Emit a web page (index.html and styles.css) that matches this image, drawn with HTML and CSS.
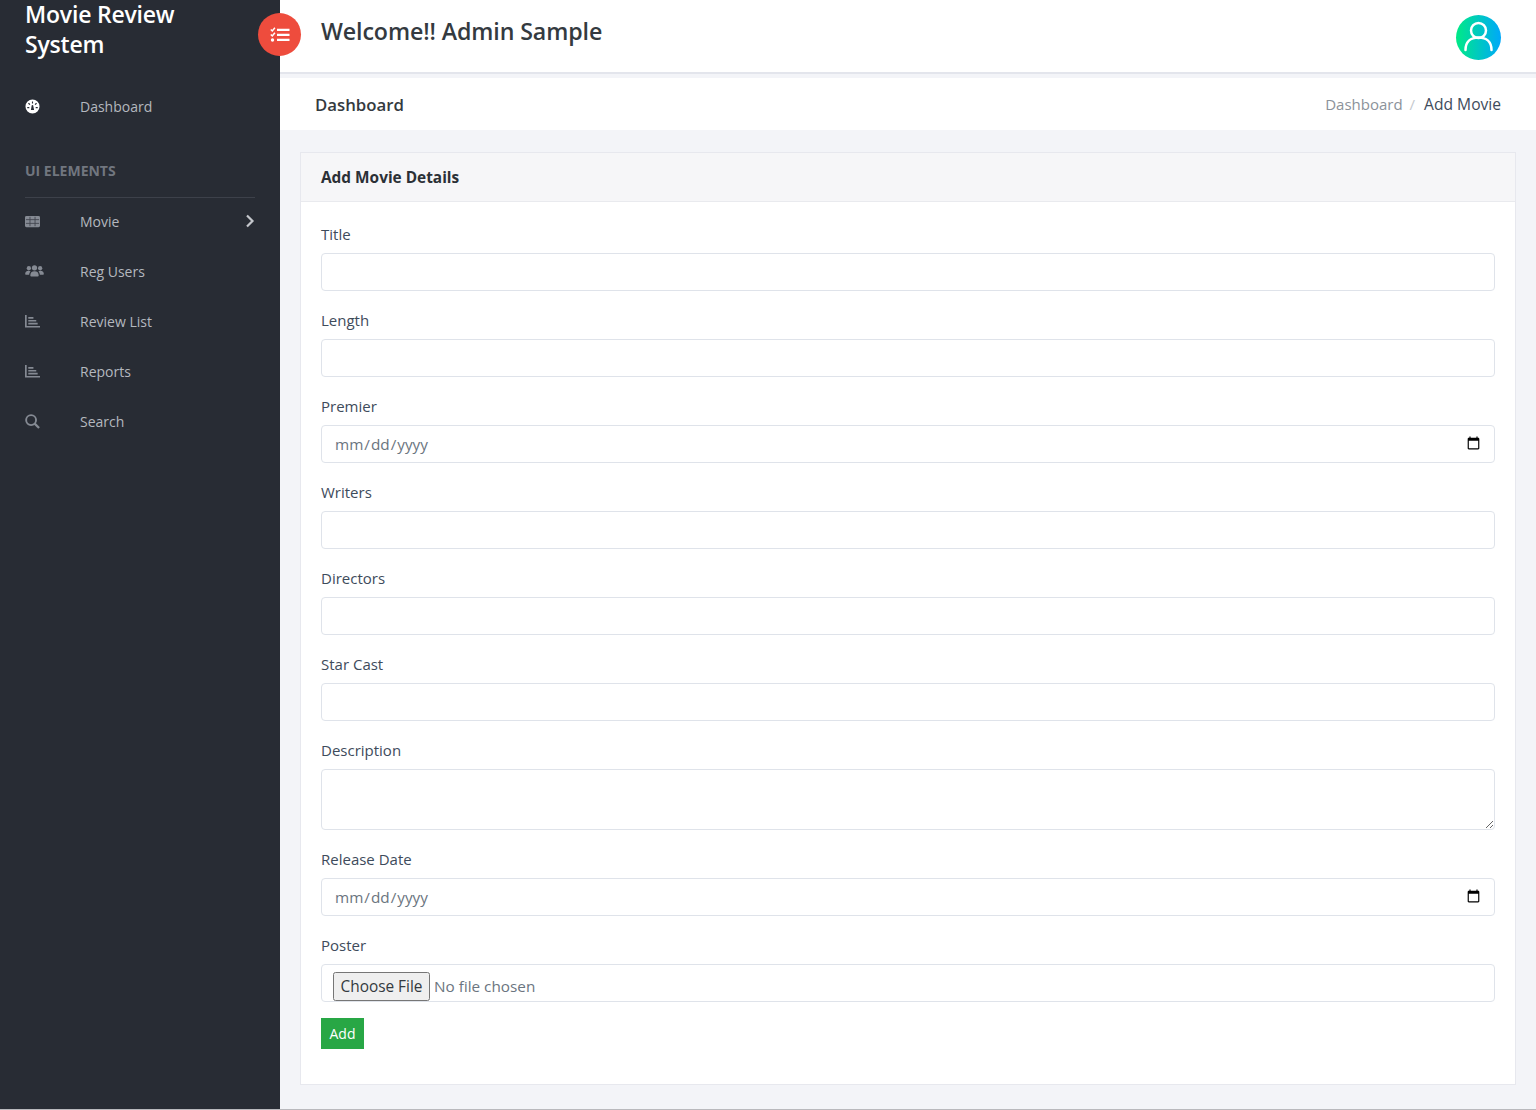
FILE: index.html
```html
<!DOCTYPE html>
<html lang="en">
<head>
<meta charset="utf-8">
<title>Add Movie</title>
<link rel="stylesheet" href="styles.css">
</head>
<body>
<div class="app">
  <aside class="sidebar">
    <div class="brand">Movie Review System</div>
    <nav class="nav">
      <a class="nav-item first"><svg class="nav-icon white" viewBox="0 0 16 16"><path fill-rule="evenodd" d="M8 .5a7.500 7.500 0 1 1 0 15 7.500 7.500 0 0 1 0-15zM7.400 2.600v2.200h1.200V2.600zM4.200 4l-1 .8 1.500 1.600 1-.8zm7.600 0-1.500 1.600 1 .8 1.500-1.600zM8.600 6.500l-1.400.2-.9 5h3.400zM2.400 8.600v1.300h2.200V8.600zm9 0v1.300h2.200V8.600z"/></svg><span>Dashboard</span></a>
      <div class="nav-title">UI ELEMENTS</div>
      <a class="nav-item"><svg class="nav-icon" viewBox="0 0 16 16"><rect x="0" y="2" width="16" height="12" rx="1.500"/><path d="M1 6h14M1 10h14M5.300 3v10M10.700 3v10" fill="none" stroke="#40444c" stroke-width=".9"/></svg><span>Movie</span><svg class="chevron" viewBox="0 0 10 14"><path d="M2 1.500 7.500 7 2 12.500" fill="none" stroke="currentColor" stroke-width="2.200"/></svg></a>
      <a class="nav-item"><svg class="nav-icon wide" viewBox="0 0 20 16"><circle cx="4" cy="4.500" r="2.300"/><circle cx="16" cy="4.500" r="2.300"/><circle cx="10" cy="4" r="2.800"/><path d="M0 11c0-2.500 1.300-3.800 3.500-3.800 1 0 1.800.3 2.300.8C4.800 9 4.300 10.200 4.300 11.500H1c-.6 0-1-.2-1-.5zM20 11c0-2.500-1.300-3.800-3.500-3.800-1 0-1.800.3-2.300.8 1 1 1.500 2.200 1.500 3.500H19c.6 0 1-.2 1-.5zM10 7.800c3 0 4.500 1.600 4.500 4.500 0 .6-.4.900-1 .9h-7c-.6 0-1-.3-1-.9 0-2.900 1.500-4.500 4.500-4.500z"/></svg><span>Reg Users</span></a>
      <a class="nav-item"><svg class="nav-icon" viewBox="0 0 16 16"><path d="M0 1h1.800v11.700H16v1.800H0zM3.500 3.200h5.500v1.800H3.500zM3.500 6.300h8.500v1.800H3.500zM3.500 9.400h10v1.800h-10z"/></svg><span>Review List</span></a>
      <a class="nav-item"><svg class="nav-icon" viewBox="0 0 16 16"><path d="M0 1h1.800v11.700H16v1.800H0zM3.500 3.200h5.500v1.800H3.500zM3.500 6.300h8.500v1.800H3.500zM3.500 9.400h10v1.800h-10z"/></svg><span>Reports</span></a>
      <a class="nav-item"><svg class="nav-icon" viewBox="0 0 16 16"><circle cx="6.500" cy="6.500" r="5.300" fill="none" stroke="currentColor" stroke-width="2"/><path d="m10.300 10.300 4.700 4.700" stroke="currentColor" stroke-width="2.400" fill="none"/></svg><span>Search</span></a>
    </nav>
  </aside>
  <button class="toggle" aria-label="Toggle menu"><svg viewBox="0 0 20 16"><path d="M7 1.800h12.500v2.300H7zM7 6.800h12.500v2.300H7zM7 11.800h12.500v2.300H7z" fill="#fff"/><path d="m.8 2.500 1.500 1.500L4.900.8M.8 7.500 2.300 9l2.600-3.200" fill="none" stroke="#fff" stroke-width="1.500"/><circle cx="2.500" cy="13" r="1.700" fill="#fff"/></svg></button>
  <div class="main">
    <header class="topbar">
      <h1 class="welcome">Welcome!! Admin Sample</h1>
      <div class="avatar"><svg viewBox="0 0 45 45"><circle cx="22.500" cy="15.500" r="7.500" fill="none" stroke="#fff" stroke-width="2.500"/><path d="M9.500 35c0-8 5-12.500 13-12.500s13 4.500 13 12.500" fill="none" stroke="#fff" stroke-width="2.500" stroke-linecap="round"/></svg></div>
    </header>
    <div class="crumbbar">
      <h2 class="crumb-title">Dashboard</h2>
      <div class="crumbs"><span class="crumb-muted">Dashboard</span><span class="crumb-sep">/</span><span class="crumb-current">Add Movie</span></div>
    </div>
    <div class="content">
      <form class="card">
        <div class="card-head">Add Movie Details</div>
        <div class="card-body">
          <div class="group"><label>Title</label><input class="control" type="text"></div>
          <div class="group"><label>Length</label><input class="control" type="text"></div>
          <div class="group"><label>Premier</label><input class="control date" type="date"></div>
          <div class="group"><label>Writers</label><input class="control" type="text"></div>
          <div class="group"><label>Directors</label><input class="control" type="text"></div>
          <div class="group"><label>Star Cast</label><input class="control" type="text"></div>
          <div class="group"><label>Description</label><textarea class="control area"></textarea></div>
          <div class="group"><label>Release Date</label><input class="control date" type="date"></div>
          <div class="group last"><label>Poster</label><input class="control file" type="file"></div>
          <button class="add" type="button">Add</button>
        </div>
      </form>
    </div>
  </div>
</div>
</body>
</html>
```
FILE: styles.css
```css
* { box-sizing: border-box; }
html, body { margin: 0; height: 1110px; overflow: hidden; }
body { font-family: "Open Sans", "Noto Sans", sans-serif; font-size: 14px; color: #3e4b5b; background: #b9b9bd; }
.app { display: flex; height: 1109px; position: relative; background: #f3f4f8; }
.sidebar { width: 280px; flex: none; background: #282c34; color: #b4b8bf; }
.brand { width: 210px; padding-left: 25px; font-size: 23px; line-height: 29.5px; font-weight: 600; color: #fff; letter-spacing: -0.2px; }
.nav { padding: 0 25px; margin-top: 32px; }
.nav-item { display: flex; align-items: center; height: 50px; font-size: 14px; color: #b4b8bf; }
.nav-item span { flex: 1; }
.nav-item.first { height: 30px; }
.nav-icon { width: 15px; height: 15px; margin-right: 40px; fill: #858a93; color: #858a93; flex: none; }
.nav-icon.wide { width: 19px; margin-right: 36px; }
.nav-icon.white { fill: #fff; }
.chevron { width: 10px; height: 14px; color: #c4c7cc; }
.nav-title { margin-top: 40px; margin-bottom: -2px; padding-bottom: 17px; border-bottom: 1px solid #3d414a; font-size: 14px; line-height: 19px; font-weight: 700; color: #71767f; }
.toggle { position: absolute; left: 258px; top: 13px; width: 43px; height: 43px; padding: 0; border: 0; border-radius: 50%; background: #ee4c3d; display: flex; align-items: center; justify-content: center; }
.toggle svg { width: 20px; height: 16px; }
.main { flex: 1; min-width: 0; display: flex; flex-direction: column; }
.topbar { height: 74px; background: #fff; border-bottom: 2px solid #e3e5ec; display: flex; justify-content: space-between; align-items: flex-start; padding: 15px 35px 0 41px; }
.welcome { margin: 0; font-size: 23.2px; line-height: 32px; font-weight: 600; color: #343a40; letter-spacing: -0.1px; }
.avatar { width: 45px; height: 45px; border-radius: 50%; background: linear-gradient(90deg, #00ea86, #00a8fa); }
.avatar svg { display: block; width: 45px; height: 45px; }
.crumbbar { margin-top: 4px; height: 52px; background: #fff; display: flex; justify-content: space-between; align-items: center; padding: 0 35px; }
.crumb-title { margin: 0; font-size: 16.8px; font-weight: 600; color: #343a40; }
.crumbs { font-size: 15px; color: #3e4b5b; }
.crumb-muted { color: #8b929a; }
.crumb-sep { color: #c5c9ce; margin: 0 9px 0 7px; }
.crumb-current { font-size: 15.6px; }
.content { padding: 22px 20px 0; }
.card { background: #fff; border: 1px solid #e7e8ee; height: 933px; }
.card-head { height: 49px; background: #f6f6f8; border-bottom: 1px solid #e9eaee; padding: 0 20px; display: flex; align-items: center; font-size: 15.4px; font-weight: 700; color: #2b3036; }
.card-body { padding: 20px 20px 0; }
.group { margin-bottom: 17px; }
.group.last { margin-bottom: 16px; }
.group label { display: block; height: 24px; margin-bottom: 7px; font-size: 15px; line-height: 24px; color: #3e4b5b; }
.control { display: block; width: 100%; height: 38px; padding: 6px 13px; border: 1px solid #dfe3ea; border-radius: 4px; background: #fff; font-family: inherit; font-size: 15.3px; color: #6b7580; outline: 0; }
.date { padding: 6px 11px 6px 12px; }
.area { height: 61px; }
.file { padding: 7px 12px 5px 11px; line-height: 24px; }
.file::file-selector-button { font-family: inherit; font-size: 15.4px; height: 29px; padding: 0 5.5px; color: #343a40; }
.add { display: block; width: 43px; height: 31px; padding: 0; border: 1px solid #28a745; background: #28a745; color: #fff; font-family: inherit; font-size: 14px; }
```
